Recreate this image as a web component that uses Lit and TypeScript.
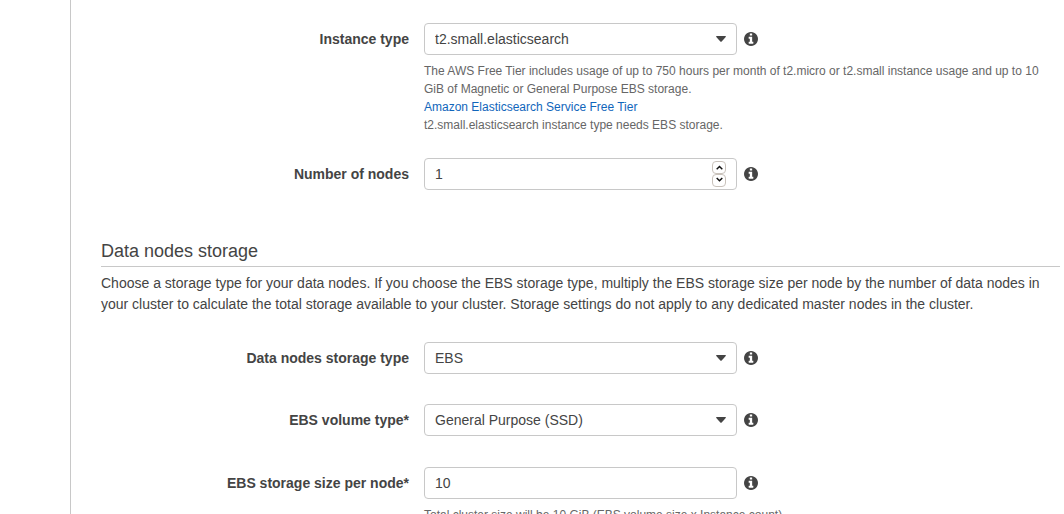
import { LitElement, html, css, svg, nothing } from "lit";
import { customElement, property, state } from "lit/decorators.js";

@customElement("info-button")
class InfoButton extends LitElement {
  @property() topic = "";

  static styles = css`
    :host { display: block; flex: none; }
    .info {
      display: block;
      padding: 0;
      border: 0;
      background: none;
      color: #444;
      cursor: pointer;
    }
    .glyph { display: block; fill: currentColor; }
  `;

  render() {
    return html`<button class="info" type="button" aria-label="About ${this.topic}">
      <svg class="glyph" width="14" height="14" viewBox="0 128 1536 1536" aria-hidden="true">
        <path d="M1024 1376v-160q0-14-9-23t-23-9h-96v-512q0-14-9-23t-23-9h-320q-14 0-23 9t-9 23v160q0 14 9 23t23 9h96v320h-96q-14 0-23 9t-9 23v160q0 14 9 23t23 9h448q14 0 23-9t9-23zM896 480v-160q0-14-9-23t-23-9h-192q-14 0-23 9t-9 23v160q0 14 9 23t23 9h192q14 0 23-9t9-23zM1536 896q0 209-103 385.5t-279.5 279.5t-385.5 103t-385.5-103t-279.5-279.5t-103-385.5t103-385.5t279.5-279.5t385.5-103t385.5 103t279.5 279.5t103 385.5z"/>
      </svg>
    </button>`;
  }
}

const chevron = (d: string) => svg`<path d=${d} fill="none" stroke="#111" stroke-width="1.5"/>`;

@customElement("app-root")
class AppRoot extends LitElement {
  @state() nodes = 1;

  static styles = css`
    :host {
      display: block;
      box-sizing: border-box;
      min-height: 100vh;
      padding-left: 70px;
      background: #fff;
      color: #444;
      font: 14px/21px "Liberation Sans", Arial, sans-serif;
    }
    .panel {
      box-sizing: border-box;
      min-height: 100vh;
      padding: 23px 4px 0 30px;
      border-left: 1px solid #c8c8c8;
    }
    .fields { display: grid; gap: 24px; }
    .fields.storage { gap: 30px; }
    .fields.volume { gap: 31px; }
    .field {
      display: grid;
      grid-template-columns: minmax(120px, 308px) minmax(0, 1fr);
      column-gap: 15px;
    }
    .label { font-weight: bold; line-height: 32px; text-align: right; }
    .line { display: flex; align-items: center; gap: 7px; }
    .box {
      box-sizing: border-box;
      display: grid;
      grid-template-columns: minmax(0, 1fr) auto;
      align-items: center;
      flex: 0 1 313px;
      height: 32px;
      border: 1px solid #c8c8c8;
      border-radius: 4px;
      background: #fff;
    }
    .box:focus-within { border-color: #1166bb; }
    .input, .select {
      box-sizing: border-box;
      grid-area: 1 / 1;
      width: 100%;
      height: 30px;
      margin: 0;
      padding: 0 10px;
      border: 0;
      outline: 0;
      background: transparent;
      color: inherit;
      font: inherit;
      appearance: none;
      -moz-appearance: textfield;
    }
    .input::-webkit-inner-spin-button, .input::-webkit-outer-spin-button {
      appearance: none;
      margin: 0;
    }
    .select { grid-column: 1 / -1; }
    .caret {
      grid-area: 1 / 2;
      margin-right: 10px;
      fill: #444;
      pointer-events: none;
    }
    .spinner { display: grid; grid-area: 1 / 2; margin-right: 10px; }
    .step {
      box-sizing: border-box;
      display: grid;
      place-items: center;
      width: 14px;
      height: 13px;
      padding: 0;
      border: 1px solid #c9c2bb;
      border-radius: 4px;
      background: #fff;
    }
    .help { margin: 7px 0 0; color: #666; font-size: 12px; line-height: 18px; }
    .link { color: #1166bb; text-decoration: none; }
    .link:hover { text-decoration: underline; }
    .title {
      margin: 50px 0 0;
      padding-bottom: 4px;
      border-bottom: 1px solid #c8c8c8;
      font-size: 18px;
      font-weight: normal;
      line-height: 22px;
    }
    .intro { margin: 6px 0 27px; }
  `;

  private field(id: string, label: string, control: unknown, help: unknown = nothing) {
    return html`<div class="field">
      <label class="label" for=${id}>${label}</label>
      <div>
        <div class="line">
          <div class="box">${control}</div>
          <info-button topic=${label}></info-button>
        </div>
        ${help}
      </div>
    </div>`;
  }

  private select(id: string, options: string[]) {
    return html`<select class="select" id=${id}>
        ${options.map((o) => html`<option>${o}</option>`)}
      </select>
      <svg class="caret" width="10" height="6" viewBox="0 0 10 6" aria-hidden="true">
        <path d="M.8 0h8.4q1.2 0 .5.9L5.7 5.4q-.7.6-1.4 0L.3.9Q-.4 0 .8 0z"/>
      </svg>`;
  }

  private step(by: number) {
    this.nodes = Math.max(1, this.nodes + by);
  }

  render() {
    return html`<main class="panel">
      <div class="fields">
        ${this.field(
          "instance-type",
          "Instance type",
          this.select("instance-type", ["t2.small.elasticsearch", "t2.medium.elasticsearch"]),
          html`<p class="help">
            The AWS Free Tier includes usage of up to 750 hours per month of t2.micro or t2.small instance usage and up to 10 GiB of Magnetic or General Purpose EBS storage.<br />
            <a class="link" href="#free-tier">Amazon Elasticsearch Service Free Tier</a><br />
            t2.small.elasticsearch instance type needs EBS storage.
          </p>`
        )}
        ${this.field(
          "node-count",
          "Number of nodes",
          html`<input class="input" id="node-count" type="number" min="1" .value=${String(this.nodes)}
              @change=${(e: Event) => (this.nodes = Number((e.target as HTMLInputElement).value) || 1)} />
            <div class="spinner">
              <button class="step" type="button" aria-label="Increase" @click=${() => this.step(1)}>
                <svg width="7" height="5" viewBox="0 0 7 5">${chevron("M.7 4.2l2.8-2.7 2.8 2.7")}</svg>
              </button>
              <button class="step" type="button" aria-label="Decrease" @click=${() => this.step(-1)}>
                <svg width="7" height="7" viewBox="0 0 7 7">${chevron("M.7 1l2.8 2.7L6.3 1")}</svg>
              </button>
            </div>`
        )}
      </div>

      <h2 class="title">Data nodes storage</h2>
      <p class="intro">
        Choose a storage type for your data nodes. If you choose the EBS storage type, multiply the EBS storage size per node by the number of data nodes in your cluster to calculate the total storage available to your cluster. Storage settings do not apply to any dedicated master nodes in the cluster.
      </p>

      <div class="fields storage">
        ${this.field("storage-type", "Data nodes storage type", this.select("storage-type", ["EBS", "Instance"]))}
        <div class="fields volume">
          ${this.field(
            "volume-type",
            "EBS volume type*",
            this.select("volume-type", ["General Purpose (SSD)", "Provisioned IOPS (SSD)", "Magnetic"])
          )}
          ${this.field(
            "volume-size",
            "EBS storage size per node*",
            html`<input class="input" id="volume-size" type="text" inputmode="numeric" value="10" />`,
            html`<p class="help">Total cluster size will be 10 GiB (EBS volume size x Instance count)</p>`
          )}
        </div>
      </div>
    </main>`;
  }
}
